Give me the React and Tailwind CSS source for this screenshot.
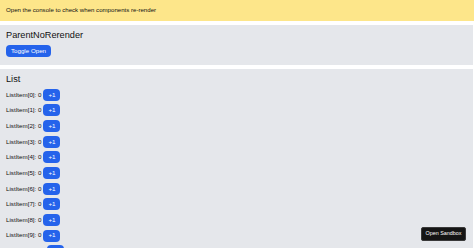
import React from "react";

export default function App() {
  const items = Array.from({ length: 12 }, (_, i) => i);
  return (
    <div
      className="relative h-[248px] w-full overflow-hidden bg-white text-[#111111]"
      style={{ fontFamily: '"Liberation Sans", Arial, sans-serif' }}
    >
      <div className="flex h-[21px] items-center bg-[#fde68a] px-[6px] text-[6.1px] leading-none">
        Open the console to check when components re-render
      </div>
      <div className="mt-[4px] mr-[1.5px] flex flex-col items-start bg-[#e5e7eb] px-[6px] pt-[4.4px] pb-[7.5px]">
        <h1 className="text-[9.2px] leading-[13px]">ParentNoRerender</h1>
        <button className="mt-[2.9px] block h-[12px] w-[45px] rounded-[4px] bg-[#2563eb] text-[6.2px] leading-none text-white">
          Toggle Open
        </button>
      </div>
      <div className="mt-[4px] mr-[1.5px] flex flex-col bg-[#e5e7eb] px-[6px] pt-[4.4px]">
        <h2 className="text-[9.2px] leading-[13px]">List</h2>
        <div className="mt-[2.5px] flex flex-col gap-[3.67px]">
          {items.map((i) => (
            <div key={i} className="flex h-[12px] items-center gap-[2px] text-[6.2px] leading-none">
              <span>ListItem[{i}]: 0</span>
              <button className="block h-[12px] w-[17px] rounded-[4px] bg-[#2563eb] text-[6.2px] leading-none text-white">
                +1
              </button>
            </div>
          ))}
        </div>
      </div>
      <div className="absolute bottom-[7px] right-[8px] flex h-[14px] w-[45px] items-center justify-center rounded-[2px] border border-[#3a3a3a] bg-[#151515] text-[5.4px] leading-none text-white">
        Open Sandbox
      </div>
    </div>
  );
}
